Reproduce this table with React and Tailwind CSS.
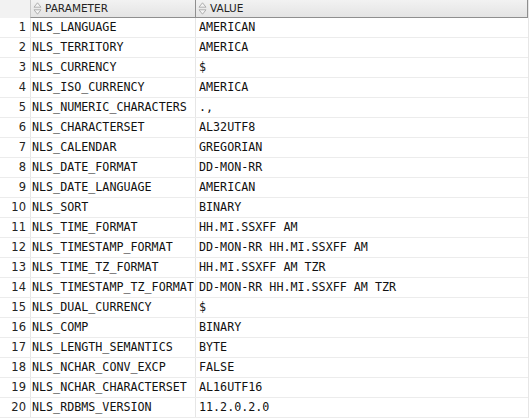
import React from "react";

const rows = [
  ["NLS_LANGUAGE", "AMERICAN"],
  ["NLS_TERRITORY", "AMERICA"],
  ["NLS_CURRENCY", "$"],
  ["NLS_ISO_CURRENCY", "AMERICA"],
  ["NLS_NUMERIC_CHARACTERS", ".,"],
  ["NLS_CHARACTERSET", "AL32UTF8"],
  ["NLS_CALENDAR", "GREGORIAN"],
  ["NLS_DATE_FORMAT", "DD-MON-RR"],
  ["NLS_DATE_LANGUAGE", "AMERICAN"],
  ["NLS_SORT", "BINARY"],
  ["NLS_TIME_FORMAT", "HH.MI.SSXFF AM"],
  ["NLS_TIMESTAMP_FORMAT", "DD-MON-RR HH.MI.SSXFF AM"],
  ["NLS_TIME_TZ_FORMAT", "HH.MI.SSXFF AM TZR"],
  ["NLS_TIMESTAMP_TZ_FORMAT", "DD-MON-RR HH.MI.SSXFF AM TZR"],
  ["NLS_DUAL_CURRENCY", "$"],
  ["NLS_COMP", "BINARY"],
  ["NLS_LENGTH_SEMANTICS", "BYTE"],
  ["NLS_NCHAR_CONV_EXCP", "FALSE"],
  ["NLS_NCHAR_CHARACTERSET", "AL16UTF16"],
  ["NLS_RDBMS_VERSION", "11.2.0.2.0"],
];

function SortIcon() {
  return (
    <svg width="9" height="13" viewBox="0 0 9 13" className="shrink-0">
      <path d="M4.5 0.8 L8 5.2 L1 5.2 Z" fill="#f4f4f4" stroke="#a8a8a8" strokeWidth="0.9" />
      <path d="M4.5 12.2 L8 7.8 L1 7.8 Z" fill="#f4f4f4" stroke="#a8a8a8" strokeWidth="0.9" />
    </svg>
  );
}

export default function App() {
  const mono = "font-['DejaVu_Sans_Mono',monospace] text-[11.7px] text-[#111]";
  return (
    <div className="w-[530px] h-[420px] bg-white overflow-hidden font-['DejaVu_Sans',sans-serif]">
      <div className="w-[529px] border-r border-[#e6e6e6]">
        <div className="grid grid-cols-[30px_165px_333px] h-[18px]">
          <div className="bg-[#f2f2f2]" />
          <div className="flex items-center gap-[3px] pl-[2px] bg-gradient-to-b from-[#f2f2f2] to-[#e4e4e4] border-l border-[#c8c8c8] border-b border-b-[#8f8f8f] text-[10.5px] text-[#222]">
            <SortIcon />
            <span>PARAMETER</span>
          </div>
          <div className="flex items-center gap-[3px] pl-[2px] bg-gradient-to-b from-[#f2f2f2] to-[#e4e4e4] border-l border-[#8f8f8f] border-r border-b border-[#8f8f8f] text-[10.5px] text-[#222]">
            <SortIcon />
            <span>VALUE</span>
          </div>
        </div>
        {rows.map(([p, v], i) => (
          <div key={i} className="grid grid-cols-[30px_165px_333px] h-[20px] border-b border-[#ececec]">
            <div className="flex items-center justify-end pr-[4px] pt-[1px] text-[11.5px] text-[#222] font-['DejaVu_Sans',sans-serif]">
              {i + 1}
            </div>
            <div className={`flex items-center pl-[1px] pt-[1px] border-l border-[#e6e6e6] whitespace-nowrap overflow-hidden ${mono}`}>
              {p}
            </div>
            <div className={`flex items-center pl-[3px] pt-[1px] border-l border-[#e6e6e6] whitespace-nowrap overflow-hidden ${mono}`}>
              {v}
            </div>
          </div>
        ))}
      </div>
    </div>
  );
}
